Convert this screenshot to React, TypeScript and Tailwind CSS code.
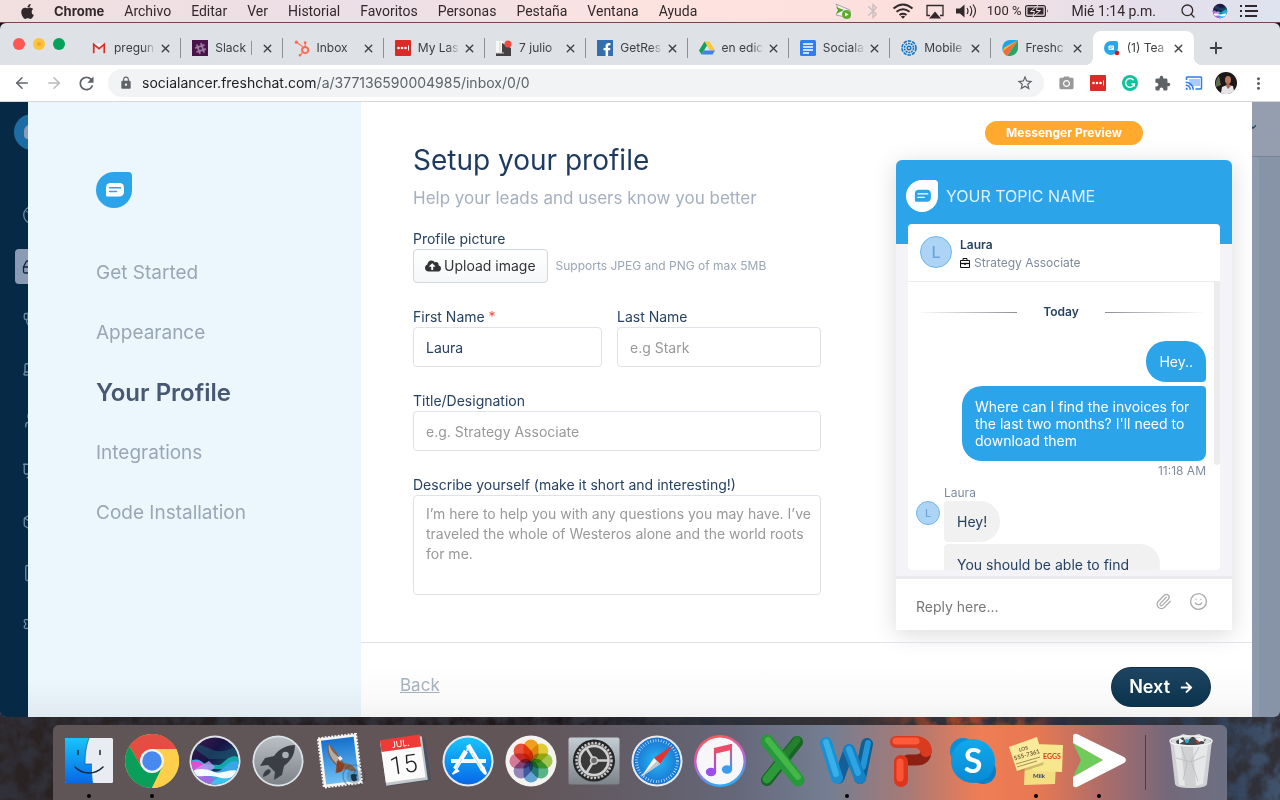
import { useState } from 'react';
import type { ReactNode } from 'react';
import {
  ArrowLeft,
  ArrowRight,
  Box,
  ChevronDown,
  Inbox,
  Laptop,
  Megaphone,
  Paperclip,
  Plus,
  Presentation,
  Search,
  Settings,
  Smartphone,
  Smile,
  User,
  X
} from 'lucide-react';
import { FaApple, FaArrowRight, FaCloudUploadAlt, FaFacebookF, FaHubspot, FaSlackHash } from 'react-icons/fa';
import {
  MdBluetooth,
  MdCameraAlt,
  MdCast,
  MdExtension,
  MdLock,
  MdMoreVert,
  MdRefresh,
  MdStarBorder
} from 'react-icons/md';

interface BrowserTab {
  title: string;
  icon: ReactNode;
}

interface DockApp {
  name: string;
  icon: ReactNode;
  running?: boolean;
}

interface FieldProps {
  id: string;
  label: string;
  required?: boolean;
  className?: string;
  children: ReactNode;
}

const ChatMark = ({ size, drop, mark }: { size: number; drop: string; mark: string }) => (
  <svg width={size} height={size} viewBox="0 0 36 36" aria-hidden="true" className="shrink-0">
    <path d="M18 0h14a4 4 0 0 1 4 4v14A18 18 0 1 1 18 0z" fill={drop} />
    <path d="M14.500 11h9a4.500 4.500 0 0 1 4.500 4.500v4.500a4.500 4.500 0 0 1-4.500 4.500H11.500A1.500 1.500 0 0 1 10 23v-7.500A4.500 4.500 0 0 1 14.500 11z" fill={mark} />
    <path d="M13.500 15.700h11M13.500 19.600h7" stroke={drop} strokeWidth="1.500" strokeLinecap="round" />
  </svg>
);

const PasswordIcon = () => (
  <svg width="16" height="16" viewBox="0 0 16 16" aria-hidden="true">
    <rect width="16" height="16" rx="1" fill="#da2b27" />
    <circle cx="3.500" cy="8" r="1.300" fill="#fff" />
    <circle cx="7" cy="8" r="1.300" fill="#fff" />
    <circle cx="10.500" cy="8" r="1.300" fill="#fff" />
    <path d="M13.500 5.500v5" stroke="#fff" />
  </svg>
);

const tabs: BrowserTab[] = [
  {
    title: 'pregun',
    icon: (
      <svg width="14" height="14" viewBox="0 0 16 16">
        <path d="M1 3h14v11H1z" fill="#f4f4f4" />
        <path d="M3 14V6l5 4 5-4v8z" fill="#e2e2e2" />
        <path d="M2 14V3.800l6 5 6-5V14" stroke="#d93025" strokeWidth="2" fill="none" />
      </svg>
    )
  },
  {
    title: 'Slack |',
    icon: (
      <span className="flex size-4 items-center justify-center bg-[#481449] text-[#9b7a9d]">
        <FaSlackHash size={13} />
      </span>
    )
  },
  { title: 'Inbox', icon: <FaHubspot size={17} className="text-[#ff6b4f]" /> },
  { title: 'My Las', icon: <PasswordIcon /> },
  {
    title: '7 julio',
    icon: (
      <svg width="16" height="16" viewBox="0 0 16 16">
        <path d="M0 1h7v14H0z" fill="#f7f7f7" />
        <path d="M6 3l9 5v8H0v-3h6z" fill="#454042" />
        <path d="M4 2v10M0 13h8" stroke="#cfcfcf" />
        <circle cx="12" cy="4" r="3.500" fill="#f04a41" />
      </svg>
    )
  },
  {
    title: 'GetRes',
    icon: (
      <span className="flex size-4 items-end justify-center bg-[#346eac] pl-1 text-white">
        <FaFacebookF size={13} />
      </span>
    )
  },
  {
    title: 'en edic',
    icon: (
      <svg width="16" height="16" viewBox="0 0 16 16">
        <path d="M5.500 1.500h5L16 10.500h-5z" fill="#fbc831" />
        <path d="M5.500 1.500L0 10.500l2.500 4L8 5.500z" fill="#11a05f" />
        <path d="M5 10.500h11l-2.500 4h-11z" fill="#3f80ea" />
      </svg>
    )
  },
  {
    title: 'Sociala',
    icon: (
      <svg width="16" height="16" viewBox="0 0 16 16">
        <rect width="16" height="16" rx="1.500" fill="#2f7df0" />
        <path d="M3 4h10M3 7h10M3 10h10M3 13h6" stroke="#fff" strokeWidth="1.300" />
      </svg>
    )
  },
  {
    title: 'Mobile',
    icon: (
      <svg width="16" height="16" viewBox="0 0 16 16" fill="none" stroke="#1274c4">
        <circle cx="8" cy="8" r="7" strokeWidth="1.600" strokeDasharray="3.500 1" />
        <circle cx="8" cy="8" r="4.500" strokeWidth="1.500" strokeDasharray="2 0.800" />
        <circle cx="8" cy="8" r="1.800" strokeWidth="1.400" />
      </svg>
    )
  },
  {
    title: 'Freshc',
    icon: (
      <svg width="16" height="16" viewBox="0 0 16 16">
        <path d="M8 0h8L1 12C-1 6 2 0 8 0z" fill="#1aa7e8" />
        <path d="M16 0v8c0 5-5 9-11 8z" fill="#27a56b" />
        <path d="M16 0L1 10c0 3 2 5 4 6z" fill="#f36b35" />
        <path d="M16 0L3 7c-1 1-2 2-2 4z" fill="#fbb33c" />
      </svg>
    )
  },
  {
    title: '(1) Tea',
    icon: (
      <svg width="16" height="16" viewBox="0 0 16 16">
        <path d="M7 1h5a2 2 0 0 1 2 2v5A7 7 0 1 1 7 1z" fill="#2ca4ea" />
        <rect x="4.500" y="5.500" width="5.500" height="4.500" rx="1" fill="#fff" />
        <path d="M5.500 7h3.500M5.500 8.500h2" stroke="#2ca4ea" strokeWidth="0.700" />
        <circle cx="13" cy="13" r="2.300" fill="#d9161f" />
      </svg>
    )
  }
];

const menus = ['Archivo', 'Editar', 'Ver', 'Historial', 'Favoritos', 'Personas', 'Pestaña', 'Ventana', 'Ayuda'];

const SiriOrb = ({ size, id }: { size: number; id: string }) => (
  <svg width={size} height={size} viewBox="0 0 52 52" aria-hidden="true">
    <defs>
      <linearGradient id={id} x1="0" y1="0" x2="1" y2="1">
        <stop offset="0" stopColor="#4a1d55" />
        <stop offset="0.400" stopColor="#171343" />
        <stop offset="1" stopColor="#137e94" />
      </linearGradient>
      <clipPath id={`${id}-clip`}>
        <circle cx="26" cy="26" r="23.500" />
      </clipPath>
    </defs>
    <circle cx="26" cy="26" r="25.500" fill="#dfe2e6" />
    <g clipPath={`url(#${id}-clip)`}>
      <rect width="52" height="52" fill={`url(#${id})`} />
      <path d="M0 10c14-4 22 8 34 6s12-6 18-2v10H20z" fill="#1c4f6a" opacity="0.700" />
      <path d="M0 23c13 8 24 6 29 7S41 15 52 24v10H0z" fill="#11a8ad" />
      <path d="M0 28c6-6 12-4 17 3s12 7 16 3 10-11 19-6v24H0z" fill="#3aa6ea" />
      <path d="M0 27c9-3 15 2 19 8l-8 6-11-2z" fill="#e14fd0" />
      <path d="M6 34l14-8 6 6-8 8z" fill="#b79cf0" opacity="0.800" />
      <path d="M3 42c11-5 19-1 26 5l-5 6H8z" fill="#a06ae0" />
      <path d="M23 47c8-8 18-5 27-6l-6 12H20z" fill="#37c4ef" />
      <path d="M0 38c9-6 17-4 25-1s17-5 27 0c-7 6-15 8-24 5S9 44 0 38z" fill="#f4fdff" />
    </g>
  </svg>
);

const PETALS: [string, number][] = [
  ['#fba61d', 0],
  ['#e8d53a', 45],
  ['#a9cf54', 90],
  ['#5bbd8d', 135],
  ['#69a9df', 180],
  ['#9a8dc4', 225],
  ['#dd7f9f', 270],
  ['#ef5744', 315]
];

const dockApps: DockApp[] = [
  {
    name: 'Finder',
    running: true,
    icon: (
      <>
        <rect x="4" y="5" width="48" height="45" rx="1.500" fill="#e9ecf3" />
        <path d="M5.500 5H28c-3 8-4 17-4 26h7c0 7 0 13 1 19H5.500A1.500 1.500 0 0 1 4 48.500v-42A1.500 1.500 0 0 1 5.500 5z" fill="url(#finder)" />
        <path d="M14 34c8 8 20 8 28 0" stroke="#16273a" strokeWidth="1.600" fill="none" strokeLinecap="round" />
        <path d="M17 17.500v4M39 17.500v4" stroke="#16273a" strokeWidth="1.500" strokeLinecap="round" />
        <path d="M28 5c-3 8-4 17-4 26h7" stroke="#25405c" strokeWidth="0.600" fill="none" />
      </>
    )
  },
  {
    name: 'Chrome',
    running: true,
    icon: (
      <>
        <circle cx="28" cy="28" r="27" fill="#ffce4b" />
        <path d="M28 16h24.300A27 27 0 0 0 5.500 13.200L17.600 34z" fill="#e44d42" />
        <path d="M5.500 13.200A27 27 0 0 0 28 55l10.400-21H17.600z" fill="#0a9e5b" />
        <path d="M28 16h24.300A27 27 0 0 1 28 55l10.400-21z" fill="#ffce4b" />
        <circle cx="28" cy="28" r="12" fill="#f3f3f3" />
        <circle cx="28" cy="28" r="9.700" fill="#4889ee" />
      </>
    )
  },
  { name: 'Siri', icon: null },
  {
    name: 'Launchpad',
    icon: (
      <>
        <circle cx="28" cy="28" r="25.500" fill="#dbe4e8" />
        <circle cx="28" cy="28" r="23.800" fill="url(#silver)" />
        <path d="M45 12c-9 0-16 4-21 11l-9 2-5 8 8-1 7 7-1 8 8-5 2-9c7-5 11-12 11-21z" fill="#3b3f43" />
        <circle cx="35.500" cy="22" r="3.300" fill="#a9b0b5" />
        <path d="M19 36c-4 1-6 4-6 8 4-1 7-3 8-6z" fill="#3b3f43" />
      </>
    )
  },
  {
    name: 'Mail',
    icon: (
      <>
        <g transform="rotate(-7 28 28)">
          <rect x="8" y="3" width="38" height="49" fill="#f5f5f2" stroke="#f5f5f2" strokeWidth="2.500" strokeDasharray="2 1.300" />
          <rect x="10.500" y="5.500" width="33" height="44" fill="url(#sky)" />
          <path d="M17 9c2 3 9 8 10 17l5 5c6 0 9 5 10 9-6-1-9-3-12-4-2 3-6 4-9 3l2-7c-6-7-9-14-6-23z" fill="#7b6352" />
          <path d="M18 10c1 6 5 11 8 14l-2 7c-5-6-8-12-6-21z" fill="#b8aaa0" />
          <path d="M24 27l7 5-3 6-6 1z" fill="#8c3e22" />
          <path d="M25 24l3-1 2 3-3 2z" fill="#f2eee8" />
        </g>
        <circle cx="41" cy="43" r="11" fill="none" stroke="#444" strokeOpacity="0.400" strokeWidth="1.200" />
        <circle cx="41" cy="43" r="7.500" fill="#334455" fillOpacity="0.250" />
        <path d="M38 42q3-2 6 0-2 2 0 5l-2 1q-4 1-4-6zM41 40l1.500-2" fill="#1c3148" stroke="#1c3148" strokeWidth="0.500" />
      </>
    )
  },
  {
    name: 'Calendario',
    icon: (
      <g transform="rotate(-8 28 28)">
        <path d="M8 9h44v42H8z" fill="#4b5260" />
        <rect x="7" y="6" width="42" height="44" fill="#c5c8ca" />
        <rect x="7" y="5" width="40" height="42" fill="#fbfbfb" />
        <rect x="7" y="4" width="40" height="12" fill="#ee3b37" />
        <text x="27" y="13.500" textAnchor="middle" fontSize="9" fill="#fff">JUL.</text>
        <text x="27" y="40" textAnchor="middle" fontSize="25" fill="#222" fontFamily="Roboto, sans-serif" fontWeight="300">15</text>
      </g>
    )
  },
  {
    name: 'App Store',
    icon: (
      <>
        <circle cx="28" cy="28" r="25.500" fill="#e4eaf0" />
        <circle cx="28" cy="28" r="23.500" fill="url(#finder)" />
        <path d="M11 28h35" stroke="#f1f8ff" strokeWidth="4" />
        <path d="M26 18L15 36M28 12l15 25" stroke="#fff" strokeWidth="4.500" />
        <path d="M28 12l-1 6M12.500 41l4-5 2 2z" stroke="#fff" strokeWidth="1.500" fill="#fff" />
        <path d="M40 35l4-2 3 7-1 2q-4-1-6-7z" fill="#fff" />
        <path d="M22 26l-6 10M32 20l9 15" stroke="#aad6f5" strokeWidth="0.800" />
      </>
    )
  },
  {
    name: 'Fotos',
    icon: (
      <>
        <circle cx="28" cy="28" r="25.500" fill="#f5f3f0" />
        {PETALS.map(([color, angle]) => (
          <rect
            key={angle}
            x="20.500"
            y="6.500"
            width="15"
            height="21.500"
            rx="7.500"
            fill={color}
            className="mix-blend-multiply"
            transform={`rotate(${angle} 28 28)`}
          />
        ))}
      </>
    )
  },
  {
    name: 'Preferencias',
    icon: (
      <>
        <rect x="2.500" y="4.500" width="51" height="47" rx="2" fill="url(#plate)" />
        <circle cx="28" cy="27.500" r="21" fill="#242526" />
        <circle cx="28" cy="27.500" r="17.500" fill="#555" stroke="#c9c9c9" strokeWidth="2.500" strokeDasharray="2 1.600" />
        <circle cx="28" cy="27.500" r="14.500" fill="#3a3a3a" stroke="#d0d0d0" strokeWidth="2.500" />
        <path d="M28 27.500h15M28 27.500l-8-13M28 27.500l-8 13" stroke="#d0d0d0" strokeWidth="2.500" />
        <circle cx="28" cy="27.500" r="3.500" fill="#6c6c6c" stroke="#d0d0d0" strokeWidth="1.500" />
      </>
    )
  },
  {
    name: 'Safari',
    icon: (
      <>
        <circle cx="28" cy="28" r="25.500" fill="#e8ebee" />
        <circle cx="28" cy="28" r="23.500" fill="url(#compass)" />
        <circle cx="28" cy="28" r="20.500" fill="none" stroke="#d3ecfa" strokeWidth="3" strokeDasharray="0.700 2" />
        <path d="M44 12L25 25l6 6z" fill="#e8322c" />
        <path d="M12 44l19-13-6-6z" fill="#f5f5f5" />
        <path d="M12 44l19-13-3-3z" fill="#c3c7c9" />
      </>
    )
  },
  {
    name: 'iTunes',
    icon: (
      <>
        <circle cx="28" cy="28" r="26" fill="url(#ring)" />
        <circle cx="28" cy="28" r="23.500" fill="#f7f6f9" />
        <path d="M22 15l17-4v6l-17 4z" fill="#ee4c66" />
        <path d="M23 15v24" stroke="url(#noteLeft)" strokeWidth="2.200" />
        <path d="M39 11v26" stroke="url(#noteRight)" strokeWidth="2.200" />
        <ellipse cx="19" cy="39" rx="5.200" ry="4.200" fill="#9a50e8" />
        <ellipse cx="35" cy="36.500" rx="5.200" ry="4.200" fill="#3c9df0" />
      </>
    )
  },
  {
    name: 'Excel',
    icon: (
      <g strokeLinecap="round" fill="none">
        <path d="M42 9L12 47" stroke="#196326" strokeWidth="12" />
        <path d="M42 7L30 22" stroke="#247f2f" strokeWidth="7" />
        <path d="M12 46l14-17" stroke="#2c9a39" strokeWidth="9" />
        <path d="M12 8l31 39" stroke="#26993a" strokeWidth="13" />
        <path d="M13 7l30 37" stroke="#45b749" strokeWidth="6" />
      </g>
    )
  },
  {
    name: 'Word',
    running: true,
    icon: (
      <g strokeLinecap="round" strokeLinejoin="round" fill="none">
        <path d="M48 11l-7 34" stroke="#0e5f94" strokeWidth="12" />
        <path d="M49 10l-5 24" stroke="#2296d6" strokeWidth="6" />
        <path d="M20 45l10-28" stroke="#125f99" strokeWidth="11" />
        <path d="M30 17l11 28" stroke="#1482c4" strokeWidth="12" />
        <path d="M30 16l9 24" stroke="#2fa4e2" strokeWidth="6" />
        <path d="M7 10l11 35" stroke="#1b8fd2" strokeWidth="12" />
        <path d="M7 9l10 32" stroke="#38b0ea" strokeWidth="6" />
      </g>
    )
  },
  {
    name: 'PowerPoint',
    icon: (
      <g strokeLinecap="round" fill="none">
        <path d="M26 27h8q9 0 10-8" stroke="#8e1f13" strokeWidth="11" />
        <path d="M14 9h20q9 1 10 9" stroke="#d93a20" strokeWidth="12" />
        <path d="M14 8h20" stroke="#ff5a3a" strokeWidth="7" />
        <path d="M19 29v18" stroke="#dc361c" strokeWidth="14" />
        <path d="M18 29v16" stroke="#fb5436" strokeWidth="7" />
      </g>
    )
  },
  {
    name: 'Skype',
    icon: (
      <>
        <circle cx="18" cy="18" r="13" fill="#0a8fd6" />
        <circle cx="38" cy="38" r="13" fill="#0a7fc6" />
        <circle cx="28" cy="28" r="22" fill="url(#skype)" />
        <text x="28" y="40" textAnchor="middle" fontSize="34" fontWeight="700" fill="#fff" fontFamily="Lato, sans-serif">S</text>
      </>
    )
  },
  {
    name: 'Notas',
    running: true,
    icon: (
      <g fontWeight="700">
        <path d="M17 29h31l-1 22-31 1z" fill="#f3df81" />
        <path d="M27 11l28 1-1 27-30-1z" fill="#f7e78f" />
        <path d="M1 14L29 4l7 25-27 9z" fill="#faeb9c" />
        <path d="M9 38l27-9-1 3-22 7z" fill="#a98f45" opacity="0.500" />
        <g fill="#6b5a33" fontSize="5" transform="rotate(-16 18 20)">
          <text x="12" y="17">LOS</text>
          <text x="5" y="24" fontSize="6">555-7361</text>
        </g>
        <path d="M8 31l24-7M9 34l20-6" stroke="#8b7843" strokeWidth="0.800" />
        <text x="35" y="26" fontSize="7" fill="#d93a22">EGGS</text>
        <text x="25" y="45" fontSize="6" fill="#263c78">Milk</text>
      </g>
    )
  },
  {
    name: 'GoPanel',
    running: true,
    icon: (
      <>
        <path d="M2 10l30 17L2 44l8-17z" fill="#6fcb5a" />
        <path d="M2 4q0-4 4-3l47 23q4 3 0 6L6 54q-4 1-4-3v-7l30-17L2 10z" fill="#fff" />
      </>
    )
  }
];

const Trash = () => (
  <svg width="56" height="56" viewBox="0 0 56 56" role="img" aria-label="Papelera">
    <path d="M8 7l12-6 8 2 8-2 12 6-4 7H12z" fill="#d7d9db" />
    <path d="M13 8l7-4 3 5 7-6 6 6 7-3-3 6H14z" fill="#43484f" />
    <path d="M16 5l5 3-5 3zM32 6l7-2 3 5z" fill="#f3f3f3" />
    <circle cx="24" cy="8" r="2" fill="#1fb3d9" />
    <path d="M33 8l3 2" stroke="#b33b31" strokeWidth="2" />
    <path d="M7 7l5 44q1 4 16 4t16-4l5-44q-3 5-21 5T7 7z" fill="#cfd1d2" />
    <path d="M11 12l5 40 6 1-4-40zM30 14l3 39 7-2 5-39z" fill="#e5e7e8" />
    <path d="M18 13l6 18-4 16M36 14l-8 14 7 20M13 25l15 4 14-6" stroke="#b9bcbe" strokeWidth="0.800" fill="none" />
    <ellipse cx="28" cy="8" rx="21" ry="5" fill="none" stroke="#f2f2f2" strokeWidth="1.500" />
  </svg>
);

const DockDefs = () => (
  <svg width="0" height="0" className="absolute" aria-hidden="true">
    <defs>
      <linearGradient id="finder" x1="0" y1="0" x2="0" y2="1">
        <stop offset="0" stopColor="#17c5fa" />
        <stop offset="1" stopColor="#0668e8" />
      </linearGradient>
      <linearGradient id="silver" x1="0" y1="0" x2="0" y2="1">
        <stop offset="0" stopColor="#b9bfc3" />
        <stop offset="1" stopColor="#7d8389" />
      </linearGradient>
      <linearGradient id="sky" x1="0" y1="0" x2="0" y2="1">
        <stop offset="0" stopColor="#1671cf" />
        <stop offset="1" stopColor="#6fc0f3" />
      </linearGradient>
      <linearGradient id="plate" x1="0" y1="0" x2="0" y2="1">
        <stop offset="0" stopColor="#c4cdd4" />
        <stop offset="1" stopColor="#7c8389" />
      </linearGradient>
      <radialGradient id="compass">
        <stop offset="0" stopColor="#2bb8f4" />
        <stop offset="1" stopColor="#1673d3" />
      </radialGradient>
      <linearGradient id="ring" x1="0.300" y1="0" x2="0.600" y2="1">
        <stop offset="0" stopColor="#fb5b50" />
        <stop offset="0.500" stopColor="#c061d8" />
        <stop offset="1" stopColor="#21b2f5" />
      </linearGradient>
      <linearGradient id="noteLeft" gradientUnits="userSpaceOnUse" x1="0" y1="15" x2="0" y2="39">
        <stop offset="0" stopColor="#ee4c66" />
        <stop offset="1" stopColor="#9a50e8" />
      </linearGradient>
      <linearGradient id="noteRight" gradientUnits="userSpaceOnUse" x1="0" y1="11" x2="0" y2="37">
        <stop offset="0" stopColor="#ee4c66" />
        <stop offset="1" stopColor="#3c9df0" />
      </linearGradient>
      <linearGradient id="skype" x1="0" y1="0" x2="0" y2="1">
        <stop offset="0" stopColor="#12a9ea" />
        <stop offset="1" stopColor="#0789d4" />
      </linearGradient>
    </defs>
  </svg>
);

const MenuBar = () => (
  <header className="relative flex h-[23px] shrink-0 items-center border-b border-[#70484e] bg-[linear-gradient(to_right,#f2dfe0,#ecdfe7_30%,#fde3e0_50%,#fde0dd_70%,#e5dfea_88%,#dfe2ef)] px-5 text-[#32282b]">
    <FaApple size={17} className="-ml-px" aria-hidden="true" />
    <nav className="ml-[18px] flex items-center gap-5 font-[Roboto,sans-serif] text-sm leading-5">
      <span className="font-[Inter,sans-serif] text-[13px] font-bold">Chrome</span>
      {menus.map((menu) => (
        <span key={menu}>{menu}</span>
      ))}
    </nav>
    <div className="ml-auto flex items-center font-[Roboto,sans-serif] text-sm">
      <svg width="18" height="18" viewBox="0 0 18 18" aria-hidden="true">
        <path d="M2 2l14 6v8L2 13l3-5z" fill="#f4eeee" stroke="#aaa4a4" />
        <path d="M2 5l8 3-8 4 2-4z" fill="#55a32f" />
        <circle cx="12.500" cy="12.500" r="4.500" fill="#5bab2e" />
        <path d="M11 10.500v4l3.500-2z" fill="#fff" />
      </svg>
      <MdBluetooth size={18} className="ml-3 text-[#cdbfc1]" />
      <svg width="22" height="16" viewBox="0 0 22 16" className="ml-2.5" fill="none" stroke="currentColor" strokeWidth="2" aria-hidden="true">
        <path d="M1.500 5.500Q11-2.500 20.500 5.500M4.500 8.800q6.500-5 13 0M7.500 12q3.500-2.500 7 0" />
        <path d="M11 15.800l-2.200-2.300q2.200-1.500 4.400 0z" fill="currentColor" stroke="none" />
      </svg>
      <svg width="18" height="15" viewBox="0 0 18 15" className="ml-3" aria-hidden="true">
        <path d="M4 11.500H1V1.500h16v10h-3" fill="none" stroke="currentColor" strokeWidth="1.300" />
        <path d="M9 7.500l6 7H3z" fill="currentColor" />
      </svg>
      <svg width="21" height="14" viewBox="0 0 21 14" className="ml-3" fill="none" stroke="currentColor" aria-hidden="true">
        <path d="M0 4.500h4l4.500-4v13l-4.500-4H0z" fill="currentColor" stroke="none" />
        <path d="M11 4q2 3 0 6M14 2q3.500 5 0 10M17 0.500q5 6.500 0 13" strokeWidth="1.200" />
      </svg>
      <span className="ml-2.5 text-[13px]">100 %</span>
      <svg width="24" height="12" viewBox="0 0 24 12" className="ml-1" aria-hidden="true">
        <rect x="0.600" y="0.600" width="19.800" height="10.800" rx="2" fill="none" stroke="currentColor" strokeWidth="1.200" />
        <path d="M22 4v4q1.500-2 0-4z" fill="currentColor" />
        <rect x="2.500" y="2.500" width="16" height="7" fill="currentColor" />
        <path d="M12.500 0.500L5.500 6.500h4L8 11.500l7.500-6h-4z" fill="currentColor" stroke="#f1dfe5" strokeWidth="1" />
      </svg>
      <span className="ml-[22px]">Mié 1:14 p.m.</span>
      <Search size={16} className="ml-6" />
      <span className="ml-4">
        <SiriOrb size={16} id="siri-menu" />
      </span>
      <svg width="18" height="12" viewBox="0 0 18 12" className="mr-0.5 ml-3" fill="none" stroke="currentColor" strokeWidth="2" aria-hidden="true">
        <path d="M0 1h2M5 1h12M0 6h2M5 6h13M0 11h2M5 11h12" />
      </svg>
    </div>
  </header>
);

// The active tab flares out at its foot with two concave corners
const activeTabClass =
  "relative rounded-t-lg bg-white before:absolute before:bottom-0 before:-left-2 before:size-2 before:bg-[radial-gradient(circle_at_top_left,transparent_8px,white_8px)] before:content-[''] after:absolute after:-right-2 after:bottom-0 after:size-2 after:bg-[radial-gradient(circle_at_top_right,transparent_8px,white_8px)] after:content-['']";

const TabStrip = () => (
  <div className="flex h-[42px] items-end rounded-t-md bg-[#dee1e6]">
    <div className="mr-[15px] ml-[13px] flex h-[42px] shrink-0 items-center gap-2">
      <span className="size-3 rounded-full bg-[#fb5753]" />
      <span className="flex size-3 items-center justify-center rounded-full bg-[#fdc340]">
        <span className="size-1 rounded-full bg-[#f5a623]" />
      </span>
      <span className="size-3 rounded-full bg-[#05a35a]" />
    </div>
    {tabs.map((tab, index) => (
      <div
        key={tab.title}
        className={`flex h-[34px] min-w-0 flex-1 items-center ${index === tabs.length - 1 ? activeTabClass : ''}`}
      >
        <span className="ml-[11px] flex w-4 shrink-0 justify-center">{tab.icon}</span>
        <span className="ml-[7px] min-w-0 flex-1 overflow-hidden whitespace-nowrap text-xs text-[#3c4043] [mask-image:linear-gradient(to_right,black_70%,transparent)]">
          {tab.title}
        </span>
        <button className="mr-2 ml-[3px] shrink-0 text-[#3c4043]" aria-label="Cerrar pestaña">
          <X size={13} strokeWidth={2.5} />
        </button>
        <span className={`h-5 w-px ${index < tabs.length - 2 ? 'bg-[#8b8e92]' : ''}`} />
      </div>
    ))}
    <div className="flex h-[34px] w-[86px] shrink-0 items-center pl-[13px]">
      <button aria-label="Nueva pestaña" className="text-[#3c4043]">
        <Plus size={18} strokeWidth={2.5} />
      </button>
    </div>
  </div>
);

const AddressBar = () => (
  <div className="flex h-[37px] items-center border-b border-[#d5d7da] bg-white px-1.5 text-[#5f6368]">
    <button className="flex w-8 justify-center" aria-label="Atrás">
      <ArrowLeft size={18} />
    </button>
    <button className="flex w-8 justify-center text-[#b8babd]" aria-label="Adelante">
      <ArrowRight size={18} />
    </button>
    <button className="flex w-8 justify-center" aria-label="Recargar">
      <MdRefresh size={21} />
    </button>
    <div className="mx-1.5 flex h-7 flex-1 items-center rounded-full bg-[#f1f3f4] pr-2.5 pl-[11px]">
      <MdLock size={14} />
      <span className="ml-[9px] flex-1 text-sm">
        <span className="text-[#202124]">socialancer.freshchat.com</span>/a/377136590004985/inbox/0/0
      </span>
      <MdStarBorder size={18} />
    </div>
    <span className="flex w-8 justify-center"><MdCameraAlt size={17} className="text-[#999]" /></span>
    <span className="flex w-8 justify-center"><PasswordIcon /></span>
    <span className="flex w-8 justify-center">
      <svg width="16" height="16" viewBox="0 0 16 16" aria-hidden="true">
        <circle cx="8" cy="8" r="8" fill="#11c39a" />
        <path d="M11.500 5.200A4.400 4.400 0 1 0 12.300 9H9.500M12.300 9v2.500" stroke="#fff" strokeWidth="1.400" fill="none" />
      </svg>
    </span>
    <span className="flex w-8 justify-center"><MdExtension size={17} /></span>
    <span className="flex w-8 justify-center">
      <MdCast size={18} className="bg-[linear-gradient(#a9cbf6,#a9cbf6)] bg-[length:11px_7px] bg-[position:4px_5px] bg-no-repeat text-[#2b7de9]" />
    </span>
    <span className="flex w-8 justify-center">
      <svg width="22" height="22" viewBox="0 0 22 22" aria-hidden="true">
        <circle cx="11" cy="11" r="11" fill="#1c1718" />
        <path d="M1 15q-1-7 3-11l2 9z" fill="#5d6c4b" />
        <ellipse cx="13" cy="8" rx="3" ry="4" fill="#b87960" />
        <path d="M6 21l1-6 5-2 6 1 1 5q-6 5-13 2z" fill="#e7e5e9" />
        <path d="M12 10l4 4-3 3-2-3z" fill="#a86b55" />
      </svg>
    </span>
    <button className="flex w-8 justify-center" aria-label="Menú">
      <MdMoreVert size={19} />
    </button>
  </div>
);

const railIcons = [
  { id: 'inbox', Icon: Inbox },
  { id: 'campaigns', Icon: Megaphone },
  { id: 'reports', Icon: Laptop },
  { id: 'people', Icon: User },
  { id: 'faq', Icon: Presentation },
  { id: 'apps', Icon: Box },
  { id: 'phone', Icon: Smartphone },
  { id: 'settings', Icon: Settings }
];

const AppRail = () => (
  <div className="w-7 shrink-0 overflow-hidden bg-[#062a45] pt-3 text-[#6d8bac]">
    <div className="ml-3.5 flex size-9 items-center rounded-full bg-[#1d6da5] pl-2.5">
      <span className="h-3.5 w-4 rounded-sm rounded-tl-md bg-[#8c9bb4]" />
    </div>
    <div className="mt-14 ml-[23px] w-[18px]">
      <svg width="18" height="18" viewBox="0 0 18 18" fill="none" stroke="currentColor" aria-hidden="true">
        <circle cx="9" cy="9" r="8.300" strokeWidth="1.300" />
        <path d="M3 5l3 2v4" />
      </svg>
    </div>
    <div className="mt-[25px] ml-[15px] flex w-9 flex-col gap-4">
      {railIcons.map(({ id, Icon }) => (
        <span
          key={id}
          className={`flex h-[35px] items-center rounded-sm pl-[7px] ${id === 'inbox' ? 'bg-[#8b9bb4] text-[#0b2b47]' : ''}`}
        >
          <Icon size={18} strokeWidth={1.75} className="shrink-0" />
        </span>
      ))}
    </div>
  </div>
);

const steps = ['Get Started', 'Appearance', 'Your Profile', 'Integrations', 'Code Installation'];

const StepList = () => (
  <aside className="w-[333px] shrink-0 bg-[linear-gradient(to_bottom,#ebf7fd_94%,#e1e9f1)] pt-[70px] pl-[68px]">
    <ChatMark size={36} drop="#2ca4ea" mark="#fff" />
    <nav className="mt-[51px] flex flex-col gap-8">
      {steps.map((step) => (
        <a
          key={step}
          href="#"
          className={
            step === 'Your Profile'
              ? 'text-2xl leading-7 font-semibold text-[#475872]'
              : 'text-[19px] leading-7 text-[#9aa6b6]'
          }
        >
          {step}
        </a>
      ))}
    </nav>
  </aside>
);

const Field = ({ id, label, required, className, children }: FieldProps) => (
  <div className={className}>
    <label htmlFor={id} className="block text-sm leading-5">
      {label} {required && <span className="text-[#f0503c]">*</span>}
    </label>
    {children}
  </div>
);

const inputClass =
  'block h-10 w-full rounded-sm border border-[#dfe3e9] px-3 text-sm outline-none placeholder:text-[#999]';

const ProfileForm = () => {
  const [firstName, setFirstName] = useState('Laura');

  return (
    <form className="w-[408px] shrink-0 pt-10 text-[#264161]">
      <h1 className="text-[28px] leading-9 text-[#1f3a5f]">Setup your profile</h1>
      <p className="mt-1.5 text-[17px] leading-7 text-[#a5b0bf]">Help your leads and users know you better</p>

      <div className="mt-[17px]">
        <span id="picture-label" className="block text-sm leading-5">Profile picture</span>
        <div className="flex items-center gap-2">
          <button
            type="button"
            aria-describedby="picture-label"
            className="flex h-[34px] items-center gap-[3px] rounded border border-[#cfd7df] bg-gradient-to-b from-white to-[#f5f7f9] px-[11px] text-sm text-[#333]"
          >
            <FaCloudUploadAlt size={16} />
            Upload image
          </button>
          <span className="text-xs text-[#99a5b5]">Supports JPEG and PNG of max 5MB</span>
        </div>
      </div>

      <div className="mt-6 flex gap-[15px]">
        <Field id="first-name" label="First Name" required className="w-[189px]">
          <input
            id="first-name"
            value={firstName}
            onChange={(e) => setFirstName(e.target.value)}
            className={inputClass}
          />
        </Field>
        <Field id="last-name" label="Last Name" className="flex-1">
          <input id="last-name" placeholder="e.g Stark" className={inputClass} />
        </Field>
      </div>

      <Field id="title" label="Title/Designation" className="mt-6">
        <input id="title" placeholder="e.g. Strategy Associate" className={inputClass} />
      </Field>

      <Field id="about" label="Describe yourself (make it short and interesting!)" className="mt-6">
        <textarea
          id="about"
          placeholder="I’m here to help you with any questions you may have. I’ve traveled the whole of Westeros alone and the world roots for me."
          className="block h-[100px] w-full resize-none rounded-sm border border-[#dfe3e9] py-2 pr-1.5 pl-3 text-sm leading-5 outline-none placeholder:text-[#999]"
        />
      </Field>
    </form>
  );
};

const MessengerPreview = () => (
  <section className="w-[336px] shrink-0 pt-[19px]">
    <div className="mx-auto flex h-6 w-[158px] items-center justify-center rounded-full bg-[#ffa92e] text-xs font-bold text-white">
      Messenger Preview
    </div>

    <div className="mt-[15px] rounded-t-md bg-[#f3f3f8] shadow-[0_4px_24px_rgba(0,0,0,0.15)]">
      <div className="flex h-[84px] items-start gap-2 rounded-t-md bg-[#2ca4ea] px-2.5 pt-5">
        <ChatMark size={32} drop="#fff" mark="#2ca4ea" />
        <h2 className="text-base leading-8 text-[#dff1fc]">YOUR TOPIC NAME</h2>
      </div>

      <div className="mx-3 -mt-5 h-[346px] overflow-hidden rounded bg-white text-[#264161]">
        <div className="flex h-[58px] items-start gap-2 border-b border-[#ebebed] px-3 pt-3">
          <span className="flex size-8 items-center justify-center rounded-full border border-[#6db6ea] bg-[#aed4f5] text-base font-medium text-[#6ba5da]">
            L
          </span>
          <div className="text-xs leading-[18px]">
            <p className="font-semibold">Laura</p>
            <p className="flex items-center gap-1 text-[#7e8c9f]">
              <svg width="10" height="10" viewBox="0 0 10 10" fill="none" stroke="#111" aria-hidden="true">
                <path d="M3 2.500v-2h4v2M0.500 2.500h9v7h-9z" />
                <path d="M0.500 5.500h9" strokeWidth="1.300" />
                <path d="M5 5v1.800" strokeWidth="2" />
              </svg>
              Strategy Associate
            </p>
          </div>
        </div>

        <div className="flex">
          <div className="min-w-0 flex-1 px-2">
            <div className="mt-5 flex items-center justify-between text-xs leading-5 font-semibold">
              <span className="h-px w-[101px] bg-gradient-to-r from-transparent to-[#8b9096]" />
              Today
              <span className="h-px w-[101px] bg-gradient-to-l from-transparent to-[#8b9096]" />
            </div>
            <div className="mt-[19px] flex flex-col items-end gap-1 text-sm leading-[17px] text-white">
              <p className="rounded-[20px] rounded-br bg-[#2ca4ea] px-[13px] py-3">Hey..</p>
              <p className="w-[244px] rounded-[20px] rounded-tr rounded-br-lg bg-[#2ca4ea] px-[13px] py-3">
                Where can I find the invoices for the last two months? I'll need to download them
              </p>
            </div>
            <p className="mt-0.5 text-right text-xs leading-4 text-[#7e8c9f]">11:18 AM</p>
            <p className="mt-1.5 ml-7 text-xs leading-4 text-[#7e8c9f]">Laura</p>
            <div className="flex items-start gap-1 text-sm leading-[17px]">
              <span className="flex size-6 items-center justify-center rounded-full border border-[#6db6ea] bg-[#aed4f5] text-[11px] font-medium text-[#6ba5da]">
                L
              </span>
              <div className="flex flex-col items-start gap-0.5">
                <p className="rounded-[20px] rounded-l bg-[#f1f1f1] px-[13px] py-3">Hey!</p>
                <p className="w-[216px] rounded-[20px] rounded-l bg-[#f1f1f1] px-[13px] py-3">You should be able to find</p>
              </div>
            </div>
          </div>
          <div className="h-[183px] w-1.5 rounded-b bg-[#ececec]" />
        </div>
      </div>

      <div className="mt-[6px] flex h-[54px] items-center border-t-3 border-[#e9e9ee] bg-white pr-6 pl-5">
        <input
          aria-label="Reply here..."
          placeholder="Reply here..."
          className="mt-1 min-w-0 flex-1 text-sm outline-none placeholder:text-[#777]"
        />
        <button aria-label="Adjuntar archivo" className="mb-1.5 text-[#aaa]">
          <Paperclip size={17} strokeWidth={1.75} />
        </button>
        <button aria-label="Emoji" className="mb-1.5 ml-[17px] text-[#aaa]">
          <Smile size={19} strokeWidth={1.75} />
        </button>
      </div>
    </div>
  </section>
);

const SetupPage = () => (
  <div className="flex min-h-0 flex-1 overflow-hidden rounded-b-md bg-[#8793a7]">
    <AppRail />
    <StepList />
    <main className="flex min-w-0 flex-1 flex-col bg-white">
      <div className="flex flex-1 justify-between pr-5 pl-[52px]">
        <ProfileForm />
        <MessengerPreview />
      </div>
      <footer className="flex h-[75px] items-center justify-between border-t border-[#dfe2e8] bg-[linear-gradient(to_bottom,transparent_30%,#f9f9f9_80%,#f2f2f2)] pr-[41px] pl-[39px]">
        <a href="#" className="mt-3 text-[17px] text-[#a5b0bf] underline">Back</a>
        <button className="mt-3.5 flex h-10 items-center gap-2.5 rounded-full border border-[#0d3048] bg-gradient-to-b from-[#1e4461] to-[#0a334e] px-[17px] text-lg font-semibold text-white">
          Next
          <FaArrowRight size={13} />
        </button>
      </footer>
    </main>
    <div className="flex w-7 shrink-0 flex-col overflow-hidden">
      <div className="flex h-[55px] items-center border-b border-[#76859c] bg-[#959eae] pb-1 text-[#24405f]">
        <ChevronDown size={10} strokeWidth={3} className="-ml-1" />
      </div>
      <div className="w-[7px] flex-1 bg-[#8e9aad]" />
    </div>
  </div>
);

const Dock = () => (
  <footer className="relative h-[83px] shrink-0 px-[53px] pt-2">
    <div className="flex h-[75px] rounded-t-md bg-[linear-gradient(to_right,#5f5557,#625558_40%,#625c65_48%,#656779_58%,#747e92_66%,#a97a76_73%,#f07d54_79%,#e67853_84%,#a76c6c_90%,#73697a_95%,#6c7082)] px-1 font-[Lato,sans-serif]">
      {dockApps.map((app) => (
        <div key={app.name} className="flex flex-1 flex-col items-center pt-2">
          <div className="flex size-14 items-center justify-center">
            {app.name === 'Siri' ? (
              <SiriOrb size={52} id="siri-dock" />
            ) : (
              <svg width="56" height="56" viewBox="0 0 56 56" role="img" aria-label={app.name}>
                {app.icon}
              </svg>
            )}
          </div>
          {app.running && <span className="mt-[5px] size-1 rounded-full bg-black" />}
        </div>
      ))}
      <div className="flex w-[92px] shrink-0 items-start pt-2.5 pl-3.5">
        <span className="h-[55px] w-px bg-[#443e45]" />
        <span className="-mt-0.5 ml-[17px]">
          <Trash />
        </span>
      </div>
    </div>
  </footer>
);

const Wallpaper = () => (
  <svg className="absolute inset-x-0 bottom-0 h-24 w-full" aria-hidden="true">
    <defs>
      <linearGradient id="rock">
        <stop offset="0" stopColor="#2a2324" />
        <stop offset="0.450" stopColor="#1d1719" />
        <stop offset="0.550" stopColor="#262e3b" />
        <stop offset="0.680" stopColor="#3c3334" />
        <stop offset="0.740" stopColor="#99442b" />
        <stop offset="0.800" stopColor="#8b4330" />
        <stop offset="0.830" stopColor="#232b3b" />
        <stop offset="0.960" stopColor="#33435a" />
        <stop offset="1" stopColor="#41536d" />
      </linearGradient>
      <filter id="grain" x="0" y="0" width="100%" height="100%">
        <feTurbulence type="fractalNoise" baseFrequency="0.060 0.050" numOctaves="5" seed="8" />
        <feColorMatrix values="0 0 0 0 0.030  0 0 0 0 0.030  0 0 0 0 0.040  3 0 0 0 -1" />
      </filter>
    </defs>
    <rect width="100%" height="100%" fill="url(#rock)" />
    <rect width="100%" height="100%" filter="url(#grain)" />
  </svg>
);

const App = () => (
  <div className="relative flex h-screen flex-col overflow-hidden bg-[#171314] font-[Inter,sans-serif]">
    <DockDefs />
    <Wallpaper />
    <MenuBar />
    <div className="relative flex min-h-0 flex-1 flex-col">
      <TabStrip />
      <AddressBar />
      <SetupPage />
    </div>
    <Dock />
  </div>
);

export default App;
